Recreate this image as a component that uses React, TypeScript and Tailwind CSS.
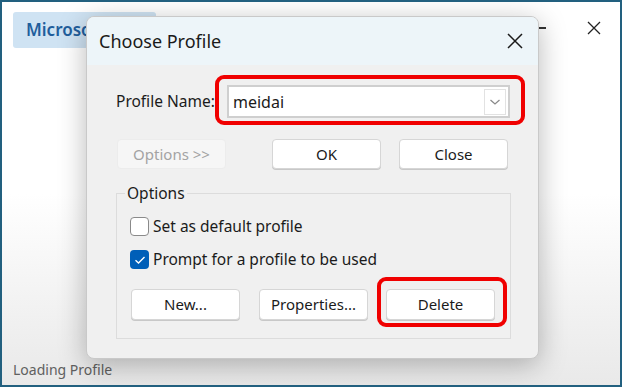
import React from "react";

const font = { fontFamily: '"Segoe UI", "Noto Sans", "Open Sans", sans-serif' };

function Btn({ children, disabled, className = "" }: { children: React.ReactNode; disabled?: boolean; className?: string }) {
  return (
    <div
      className={
        "flex items-center justify-center rounded-[4px] border text-[15px] " +
        (disabled
          ? "border-[#ececec] bg-[#f6f6f6] text-[#a3a3a3] "
          : "border-[#d6d6d6] bg-white text-[#1b1b1b] shadow-[0_1px_0_#c8c8c8] ") +
        className
      }
    >
      {children}
    </div>
  );
}

export default function App() {
  return (
    <div style={font} className="relative h-[387px] w-[622px] overflow-hidden border-2 border-[#22607f] bg-white">
      {/* background window */}
      <div className="flex h-full flex-col bg-gradient-to-b from-white via-white to-[#e9e9e9]">
        <div className="flex items-start justify-between pl-[11px] pr-[18px] pt-[10px]">
          <div className="flex h-[36px] w-[143px] items-center overflow-hidden whitespace-nowrap rounded-[3px] bg-[#cfe3f3] pl-[13px] text-[17px] font-semibold text-[#1f5e9c]">
            Microsoft Outlook
          </div>
          <div className="flex items-center gap-[40px] pt-[8px]">
            <div className="h-[1.5px] w-[10px] bg-[#333]" />
            <svg width="16" height="16" viewBox="0 0 16 16">
              <path d="M2 2 L14 14 M14 2 L2 14" stroke="#222" strokeWidth="1.3" />
            </svg>
          </div>
        </div>
        <div className="flex-1" />
        <div className="pb-[5px] pl-[11px] text-[14px] text-[#606060]">Loading Profile</div>
      </div>

      {/* dialog */}
      <div className="absolute left-[84px] top-[14px] flex h-[343px] w-[453px] flex-col overflow-hidden rounded-[8px] border border-[#c9c9c9] bg-[#f0f0f0] shadow-[0_6px_28px_rgba(0,0,0,0.28)]">
        <div className="flex h-[48px] shrink-0 items-center justify-between bg-[#edf5f9] pl-[12px] pr-[14px]">
          <span className="text-[18px] text-[#1a1a1a]">Choose Profile</span>
          <svg width="18" height="18" viewBox="0 0 18 18">
            <path d="M2 2 L16 16 M16 2 L2 16" stroke="#1a1a1a" strokeWidth="1.5" />
          </svg>
        </div>
        <div className="flex flex-col pl-[29px] pr-[28px] text-[15.5px]">
          <div className="mt-[20px] flex items-center">
            <span className="w-[111px] text-[#1b1b1b]">Profile Name:</span>
            <div className="flex h-[33px] w-[283px] items-center justify-between border-2 border-[#cfcfcf] bg-white pl-[4px] pr-[2px]">
              <span className="text-[16px] text-[#1b1b1b]">meidai</span>
              <div className="flex h-[26px] w-[22px] items-center justify-center border border-[#e2e2e2] bg-white">
                <svg width="12" height="8" viewBox="0 0 12 8">
                  <path d="M1.5 2 L6 6 L10.5 2" stroke="#8a8a8a" strokeWidth="1.3" fill="none" />
                </svg>
              </div>
            </div>
          </div>
          <div className="mt-[21px] flex items-center">
            <Btn disabled className="ml-[1px] h-[30px] w-[109px]">Options &gt;&gt;</Btn>
            <Btn className="ml-[46px] h-[30px] w-[109px]">OK</Btn>
            <Btn className="ml-[18px] h-[30px] w-[109px]">Close</Btn>
          </div>
          <div className="relative mt-[24px] h-[146px] w-[395px] border border-[#dcdcdc]">
            <span className="absolute left-[8px] top-[-11px] bg-[#f0f0f0] px-[2px] leading-[20px] text-[#1b1b1b]">Options</span>
            <div className="flex flex-col pl-[13px] pt-[21px]">
              <div className="flex items-center gap-[4px]">
                <div className="h-[19px] w-[19px] rounded-[4px] border-[1.5px] border-[#8a8a8a] bg-white" />
                <span className="text-[#1b1b1b]">Set as default profile</span>
              </div>
              <div className="mt-[10px] flex items-center gap-[4px]">
                <div className="flex h-[19px] w-[19px] items-center justify-center rounded-[4px] bg-[#005fb8]">
                  <svg width="12" height="10" viewBox="0 0 12 10">
                    <path d="M1.5 5.2 L4.5 8 L10.5 2" stroke="white" strokeWidth="1.4" fill="none" />
                  </svg>
                </div>
                <span className="text-[#1b1b1b]">Prompt for a profile to be used</span>
              </div>
              <div className="mt-[17px] flex items-center">
                <Btn className="ml-[1px] h-[31px] w-[109px]">New...</Btn>
                <Btn className="ml-[19px] h-[31px] w-[109px]">Properties...</Btn>
                <Btn className="ml-[18px] h-[31px] w-[109px]">Delete</Btn>
              </div>
            </div>
          </div>
        </div>
      </div>

      {/* red annotation boxes */}
      <div className="absolute left-[213px] top-[73px] h-[50px] w-[310px] rounded-[9px] border-4 border-[#f00000]" />
      <div className="absolute left-[375px] top-[275px] h-[50px] w-[130px] rounded-[9px] border-4 border-[#f00000]" />
    </div>
  );
}
